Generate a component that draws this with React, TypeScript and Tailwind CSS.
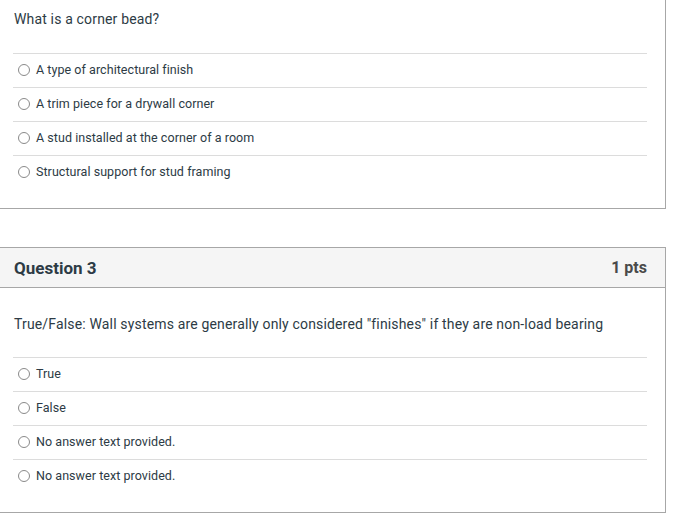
import React from "react";

function Option({ text }: { text: string }) {
  return (
    <div className="flex h-[34px] items-center border-t border-[#dcdcdc] pb-[2px]">
      <span className="ml-[5px] mr-[6px] box-border h-[12px] w-[12px] shrink-0 rounded-full border border-[#8a8a8a] bg-white" />
      <span className="text-[12.5px] leading-[16px] tracking-[0.05px] text-[#2d3b45]">{text}</span>
    </div>
  );
}

function Options({ items }: { items: string[] }) {
  return (
    <div className="flex flex-col">
      {items.map((t, i) => (
        <Option key={i} text={t} />
      ))}
    </div>
  );
}

export default function App() {
  return (
    <div className="min-h-[530px] bg-white font-['Roboto','Liberation_Sans',sans-serif] text-[#2d3b45]">
      {/* Card 1 (continuation) */}
      <div className="box-border w-[666px] border-r border-b border-[#a7a7a7] pb-[19px] pl-[13px] pr-[18px]">
        <div className="pl-[1px] pt-[9px] pb-[24px] text-[14px] leading-[20px] tracking-[0.16px]">
          What is a corner bead?
        </div>
        <Options
          items={[
            "A type of architectural finish",
            "A trim piece for a drywall corner",
            "A stud installed at the corner of a room",
            "Structural support for stud framing",
          ]}
        />
      </div>

      {/* Card 2 */}
      <div className="mt-[38px] box-border w-[666px] border-t border-r border-b border-[#a7a7a7]">
        <div className="flex h-[40px] items-center justify-between border-b border-[#a7a7a7] bg-[#f5f5f5] pl-[14px] pr-[18px]">
          <span className="text-[17px] font-bold leading-[20px] text-[#2d3b45]">Question 3</span>
          <span className="text-[16px] font-bold leading-[20px] text-[#4a4a4a]">1 pts</span>
        </div>
        <div className="pb-[19px] pl-[13px] pr-[18px]">
          <div className="pl-[1px] pt-[26px] pb-[23px] text-[14px] leading-[20px] tracking-[0.16px]">
            True/False: Wall systems are generally only considered "finishes" if they are non-load bearing
          </div>
          <Options
            items={["True", "False", "No answer text provided.", "No answer text provided."]}
          />
        </div>
      </div>
    </div>
  );
}
